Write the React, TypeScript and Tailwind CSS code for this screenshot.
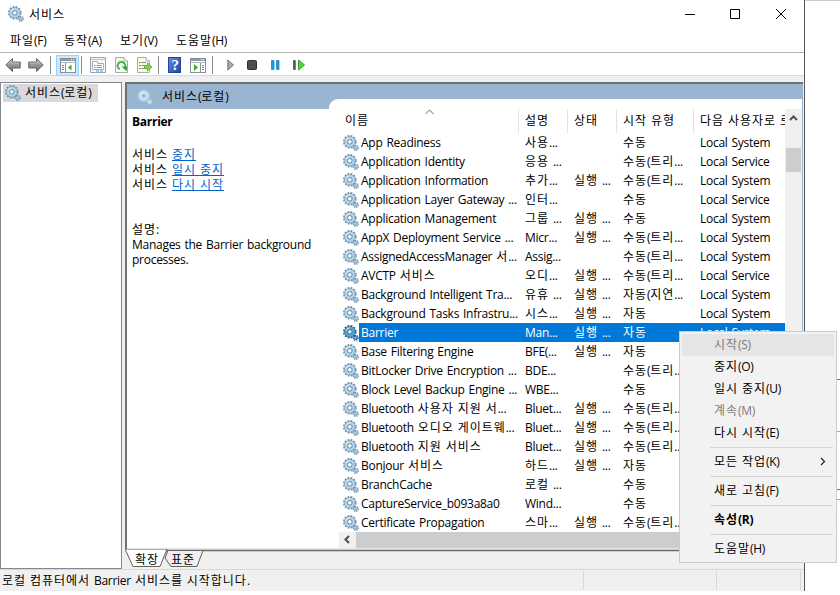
import React from "react";

type Row = [string, string, string, string, string];

const SYS = "Local System";
const SVC = "Local Service";
const RUN = "실행 ...";

const rows: Row[] = [
  ["App Readiness", "사용...", "", "수동", SYS],
  ["Application Identity", "응용 ...", "", "수동(트리...", SVC],
  ["Application Information", "추가...", RUN, "수동(트리...", SYS],
  ["Application Layer Gateway ...", "인터...", "", "수동", SVC],
  ["Application Management", "그룹 ...", RUN, "수동", SYS],
  ["AppX Deployment Service ...", "Micr...", RUN, "수동(트리...", SYS],
  ["AssignedAccessManager 서...", "Assig...", "", "수동(트리...", SYS],
  ["AVCTP 서비스", "오디...", RUN, "수동(트리...", SVC],
  ["Background Intelligent Tra...", "유휴 ...", RUN, "자동(지연...", SYS],
  ["Background Tasks Infrastru...", "시스...", RUN, "자동", SYS],
  ["Barrier", "Man...", RUN, "자동", SYS],
  ["Base Filtering Engine", "BFE(...", RUN, "자동", SVC],
  ["BitLocker Drive Encryption ...", "BDE...", "", "수동(트리...", SYS],
  ["Block Level Backup Engine ...", "WBE...", "", "수동", SYS],
  ["Bluetooth 사용자 지원 서...", "Bluet...", RUN, "수동(트리...", SVC],
  ["Bluetooth 오디오 게이트웨...", "Bluet...", RUN, "수동(트리...", SVC],
  ["Bluetooth 지원 서비스", "Bluet...", RUN, "수동(트리...", SVC],
  ["Bonjour 서비스", "하드...", RUN, "자동", SYS],
  ["BranchCache", "로컬 ...", "", "수동", SVC],
  ["CaptureService_b093a8a0", "Wind...", "", "수동", SYS],
  ["Certificate Propagation", "스마...", RUN, "수동(트리...", SYS],
];

function T({ children }: { children: string }) {
  return (
    <span>
      {children.split(/([가-힣]+)/).map((part, i) =>
        i % 2 ? <span key={i} className="tracking-[0.96px]">{part}</span> : part
      )}
    </span>
  );
}

function Gear({ selected = false, faded = false }: { selected?: boolean; faded?: boolean }) {
  const rim = selected ? "#1f5c8a" : faded ? "#a8c8dc" : "#6c8ea6";
  const body = selected ? "#5ba3d6" : faded ? "#c3e0f2" : "#b0d5ec";
  return (
    <svg width="16" height="16" viewBox="0 0 16 16" className="shrink-0">
      <circle cx="6.8" cy="6.8" r="5.8" fill="none" stroke={rim} strokeWidth="2" strokeDasharray="1.8 1.24" />
      <circle cx="6.8" cy="6.8" r="3.9" fill="none" stroke={body} strokeWidth="3" />
      <circle cx="6.8" cy="6.8" r="5.3" fill="none" stroke={rim} strokeWidth=".5" />
      <circle cx="6.8" cy="6.8" r="2.3" fill={selected ? "#e5f3ff" : faded ? "#9ab4d2" : "#fff"} stroke={selected ? "#24577e" : faded ? "#d8edf8" : "#4d7693"} strokeWidth=".9" />
      <path d="M3 5.5Q4 3 6.6 2.8" stroke="#e7f6ff" fill="none" />
      <circle cx="12.8" cy="12.8" r="2.4" fill={body} stroke={rim} strokeWidth="1.4" strokeDasharray="1.1 .8" />
      <circle cx="12.8" cy="12.8" r=".9" fill="#fff" stroke={rim} strokeWidth=".6" />
    </svg>
  );
}

function Arrow({ flip = false }: { flip?: boolean }) {
  return (
    <svg width="16" height="16" viewBox="0 0 16 16" className={flip ? "-scale-x-100" : ""}>
      <defs>
        <linearGradient id="arrowFill" x2="0" y2="1">
          <stop stopColor="#bcbcbc" />
          <stop offset="1" stopColor="#6f6f6f" />
        </linearGradient>
      </defs>
      <path d="M.8 8 7.5 1.500V5H15.2V11H7.5V14.5Z" fill="url(#arrowFill)" stroke="#666" strokeLinejoin="round" />
      <path d="M2.8 7.5 6.5 4V6H14" fill="none" stroke="#c9c9c9" strokeWidth=".7" />
    </svg>
  );
}

function Pane({ right = false }: { right?: boolean }) {
  return (
    <svg width="16" height="15" viewBox="0 0 16 15" shapeRendering="crispEdges">
      <path d="M.5.5H15.5V14.5H.5Z" fill="#fff" stroke="#87929c" />
      <path d="M1 1H15V3H1Z" fill="#8c9aa5" />
      <path d="M11 1H12V2H11ZM13 1H14V2H13Z" fill="#fff" />
      <path d="M1 4.5H15" stroke="#aeb8c0" />
      {right ? (
        <>
          <path d="M10.5 5V14" stroke="#87929c" />
          <path d="M12 7.5H14M12 9.5H14M12 11.5H14" stroke="#4d8bb6" />
          <path d="M4 6 8 9.5 4 13Z" fill="#33b51f" shapeRendering="auto" />
        </>
      ) : (
        <>
          <path d="M5.5 5V14" stroke="#87929c" />
          <path d="M2 7.5H4M2 9.5H4M2 11.5H4" stroke="#4d8bb6" />
          <path d="M11.5 6.500 8 9.5 11.5 12.500Z" fill="#33b51f" shapeRendering="auto" />
        </>
      )}
    </svg>
  );
}

function Properties() {
  return (
    <svg width="16" height="16" viewBox="0 0 16 16">
      <path d="M.5.5H15.5V15.5H.5Z" fill="#f5f8fb" stroke="#98a4ae" />
      <path d="M1 2.5H15" stroke="#b9c3cb" />
      <path d="M2.5 12.5V4.5H7.5V6.5H13.5V12.5Z" fill="#fff" stroke="#a6b0bb" />
      <path d="M4 8.5H5.5M4 10.5H5.5" stroke="#2eb0d2" />
      <path d="M6.5 8.5H12M6.5 10.5H12" stroke="#9199a0" />
      <path d="M6 14H9M10 14H13" stroke="#2eb0d2" />
    </svg>
  );
}

function Page({ kind }: { kind: "refresh" | "export" }) {
  return (
    <svg width="17" height="16" viewBox="0 0 17 16">
      <path d="M1.5.5H10L13.5 4V15.5H1.5Z" fill={kind === "refresh" ? "#f8f8f8" : "#fff9df"} stroke="#aaa" />
      <path d="M10 .5V4H13.5" fill="#fff" stroke="#aaa" />
      {kind === "refresh" ? (
        <>
          <path d="M5.8 12.2A3.8 3.8 0 1 1 11 10" fill="none" stroke="#3fb53a" strokeWidth="2" />
          <path d="M7.6 9.5H13.2L12.500 14.2Z" fill="#25a52d" />
        </>
      ) : (
        <>
          <path d="M3 5.5H4.5M3 8.5H4.5M3 11.5H4.5" stroke="#666" />
          <path d="M5.5 5.5H10M5.5 8.5H9M5.5 11.5H10" stroke="#888" />
          <path d="M8.5 8.5H11.5V5.8L16 10 11.5 14V11.5H8.5Z" fill="#7bd252" stroke="#43ac2a" strokeWidth=".7" />
        </>
      )}
    </svg>
  );
}

function Help() {
  return (
    <span className="flex h-4 w-[13px] items-center justify-center border border-[#24449b] bg-gradient-to-br from-[#6288d7] to-[#2547ad] pl-px font-['Liberation_Serif',serif] text-[15px] leading-none font-bold text-white">
      ?
    </span>
  );
}

const Divider = () => <span className="h-[18px] w-px bg-[#8d8d8d]" />;

function Toolbar() {
  return (
    <div className="flex h-[24px] items-center border-t border-b border-t-[#b2b2b2] border-b-[#dadada] bg-white pt-[2px] pl-[5px]">
      <Arrow />
      <span className="ml-[7px] flex"><Arrow flip /></span>
      <span className="ml-[6px] flex"><Divider /></span>
      <span className="ml-[5px] flex h-[21px] w-[23px] items-center justify-center border border-[#99d1ff] bg-[#cce8ff] pt-px"><Pane /></span>
      <span className="ml-[2px] flex"><Divider /></span>
      <span className="ml-[8px] flex"><Properties /></span>
      <span className="ml-[8px] flex"><Page kind="refresh" /></span>
      <span className="ml-[5px] flex"><Page kind="export" /></span>
      <span className="ml-[5px] flex"><Divider /></span>
      <span className="ml-[9px] flex"><Help /></span>
      <span className="ml-[9px] flex pt-px"><Pane right /></span>
      <span className="ml-[6px] flex"><Divider /></span>
      <svg className="ml-[14px]" width="80" height="14" viewBox="0 0 80 14">
        <path d="M.8 2 6.5 7 .8 12Z" fill="#aaa" stroke="#777" />
        <rect x="20.5" y="2.5" width="9" height="9" rx="1" fill="#4d4d4d" stroke="#303030" />
        <path d="M44.5 2.5H47V11.5H44.5ZM49.5 2.5H52V11.5H49.5Z" fill="#1c9ae8" stroke="#1479be" strokeWidth=".7" />
        <path d="M66.5 2.5H68.3V11.5H66.5Z" fill="#555" stroke="#444" strokeWidth=".7" />
        <path d="M71.5 2 77.5 7 71.5 12Z" fill="#55d536" stroke="#28a91b" />
      </svg>
    </div>
  );
}

function ListPane() {
  return (
    <div className="flex w-[473px] shrink-0 flex-col rounded-tl-[9px] bg-white pt-[10px] pl-[10px]">
      <div className="flex h-[423px]">
        <div className="w-[446px] shrink-0 overflow-hidden">
          <div className="relative flex h-6 items-center whitespace-nowrap">
            <span className="flex h-6 w-[180px] shrink-0 items-center border-r border-[#e2e2e2] pb-[2px] pl-[6px]"><T>이름</T></span>
            <svg className="absolute top-0 left-[86px]" width="9" height="6"><path d="M.5 5 4.5 1 8.5 5" fill="none" stroke="#666" /></svg>
            <span className="flex h-6 w-[49px] shrink-0 items-center border-r border-[#e2e2e2] pb-[2px] pl-[6px]"><T>설명</T></span>
            <span className="flex h-6 w-[49px] shrink-0 items-center border-r border-[#e2e2e2] pb-[2px] pl-[6px]"><T>상태</T></span>
            <span className="flex h-6 w-[77px] shrink-0 items-center border-r border-[#e2e2e2] pb-[2px] pl-[6px]"><T>시작 유형</T></span>
            <span className="shrink-0 pb-[2px] pl-[6px]"><T>다음 사용자로 로그온</T></span>
          </div>
          {rows.map((r, i) => (
            <div key={r[0]} className={i === 10 ? "flex h-[19px] whitespace-nowrap text-white" : "flex h-[19px] whitespace-nowrap"}>
              <span className="flex w-5 shrink-0 items-center pl-[4px]"><Gear selected={i === 10} /></span>
              <div className={i === 10 ? "flex h-[19px] w-[426px] items-center bg-[#0078d7]" : "flex h-[19px] w-[426px] items-center"}>
                <span className="w-[166px] shrink-0 pl-[2px]"><T>{r[0]}</T></span>
                <span className="w-[49px] shrink-0"><T>{r[1]}</T></span>
                <span className="w-[49px] shrink-0"><T>{r[2]}</T></span>
                <span className="w-[77px] shrink-0"><T>{r[3]}</T></span>
                <T>{r[4]}</T>
              </div>
            </div>
          ))}
        </div>
        <div className="flex w-[17px] flex-col items-center bg-[#f0f0f0]">
          <svg width="17" height="17"><path d="M5 11 8.5 7.5 12 11" fill="none" stroke="#505050" strokeWidth="2" /></svg>
          <div className="mt-[22px] h-6 w-[15px] bg-[#cdcdcd]" />
        </div>
      </div>
      <div className="flex h-4 bg-[#cdcdcd]">
        <div className="w-[17px] bg-[#f0f0f0]"><svg width="17" height="16"><path d="M10 4 6.5 7.500 10 11" fill="none" stroke="#505050" strokeWidth="2" /></svg></div>
      </div>
    </div>
  );
}

const Sep = () => <div className="flex h-[7px] items-center pr-[1px] pl-[28px]"><div className="h-px w-full bg-[#d7d7d7]" /></div>;

function Item({ label, state = "", children }: { label: string; children?: React.ReactNode; state?: "" | "off" | "hot" | "bold" }) {
  const look = {
    "": "text-black",
    off: "text-[#7d7d7d]",
    hot: "bg-[#e5e5e5] text-[#7d7d7d]",
    bold: "font-bold text-black",
  }[state];
  return (
    <div className={`flex h-[22px] items-center justify-between pr-[8px] pb-[2px] pl-[32px] ${look}`}>
      <T>{label}</T>
      {children}
    </div>
  );
}

function ContextMenu() {
  return (
    <div className="absolute top-[331px] left-[679px] h-[232px] w-[158px] border border-[#ccc] bg-[#f2f2f2] p-[2px] whitespace-nowrap">
      <Item state="hot" label="시작(S)" />
      <Item label="중지(O)" />
      <Item label="일시 중지(U)" />
      <Item state="off" label="계속(M)" />
      <Item label="다시 시작(E)" />
      <Sep />
      <Item label="모든 작업(K)">
        <svg width="6" height="9"><path d="M1 1 4.5 4.5 1 8" fill="none" stroke="#222" strokeWidth="1.2" /></svg>
      </Item>
      <Sep />
      <Item label="새로 고침(F)" />
      <Sep />
      <Item state="bold" label="속성(R)" />
      <Sep />
      <Item label="도움말(H)" />
    </div>
  );
}

function Action({ label }: { label: string }) {
  return (
    <div>
      <T>서비스</T> <span className="text-[#0066cc] underline"><T>{label}</T></span>
    </div>
  );
}

export default function App() {
  return (
    <div className="relative flex h-[595px] w-[840px] overflow-hidden bg-white font-['Open_Sans','Noto_Sans_CJK_KR',sans-serif] text-[12px] leading-[15px] tracking-[-0.27px] text-black [word-spacing:1.1px]">
      <div className="flex h-[591px] w-[805px] shrink-0 flex-col border-r border-[#555] bg-[#f0f0f0]">
        <div className="flex h-7 items-center bg-white pl-2">
          <Gear />
          <span className="ml-[5px] grow"><T>서비스</T></span>
          <svg width="122" height="28" viewBox="0 0 122 28" fill="none" stroke="#000">
            <path d="M3 14.5H13" />
            <path d="M48.500 9.500H57.500V18.500H48.500Z" />
            <path d="M94 9 104 19M104 9 94 19" />
          </svg>
        </div>
        <div className="flex h-6 items-center bg-white pl-[10px]">
          <span className="w-[54px]"><T>파일(F)</T></span>
          <span className="w-[56px]"><T>동작(A)</T></span>
          <span className="w-[56px]"><T>보기(V)</T></span>
          <T>도움말(H)</T>
        </div>
        <Toolbar />
        <div className="flex h-[493px] pt-[6px]">
          <div className="h-[487px] w-[122px] border border-[#828790] bg-white pt-[1px] pl-[2px]">
            <div className="flex h-[18px] w-[95px] items-center bg-[#d9d9d9] pl-[2px]"><Gear /><span className="ml-[4px] pb-[2px] whitespace-nowrap"><T>서비스(로컬)</T></span></div>
          </div>
          <div className="ml-[3px] flex w-[678px] flex-col">
            <div className="flex h-[467px] flex-col border-t-2 border-l-2 border-[#717171]">
              <div className="flex h-[464px] bg-[#99b4d1]">
                <div className="flex w-[202px] flex-col">
                  <div className="flex h-[25px] items-center pl-[10px]"><Gear faded /><span className="ml-[9px]"><T>서비스(로컬)</T></span></div>
                  <div className="grow bg-white pt-[5px] pl-[5px]">
                    <div className="font-bold">Barrier</div>
                    <div className="mt-[18px]"><Action label="중지" /></div>
                    <Action label="일시 중지" />
                    <Action label="다시 시작" />
                    <div className="mt-[30px]"><T>설명:</T></div>
                    <div>Manages the Barrier background<br />processes.</div>
                  </div>
                </div>
                <div className="flex pt-[15px]"><ListPane /></div>
              </div>
              <div className="h-px bg-[#e3e3e3]" />
            </div>
            <div className="flex h-[20px]">
              <svg className="absolute" width="678" height="19" viewBox="0 0 678 19">
                <path d="M40 1.5H678" stroke="#696969" strokeWidth="1.500" />
                <path d="M43 1.500H78L72 17.500H46L40 9Z" fill="#f0f0f0" stroke="#606060" />
                <path d="M0 0 8 17.500H35L42 0Z" fill="#fff" stroke="#606060" />
              </svg>
              <span className="relative w-[46px] pt-[3px] pl-[10px]"><T>확장</T></span>
              <span className="relative pt-[3px]"><T>표준</T></span>
            </div>
          </div>
        </div>
        <div className="flex h-[22px] items-center border-t border-[#d7d7d7] pl-[2px]">
          <span className="w-[581px]"><T>로컬 컴퓨터에서 Barrier 서비스를 시작합니다.</T></span>
          <span className="h-[19px] w-[133px] border-l border-[#d7d7d7]" />
          <span className="h-[19px] w-[85px] border-x border-[#d7d7d7]" />
        </div>
      </div>
      <div className="flex grow flex-col items-end border-t border-[#ccc]">
        <div className="mt-[378px] h-px w-[3px] bg-[#777]" />
        <div className="mt-[51px] h-px w-[3px] bg-[#aaa]" />
        <div className="mt-[57px] h-px w-[3px] bg-[#777]" />
        <div className="mt-[9px] h-px w-[3px] bg-[#aaa]" />
      </div>
      <ContextMenu />
    </div>
  );
}
